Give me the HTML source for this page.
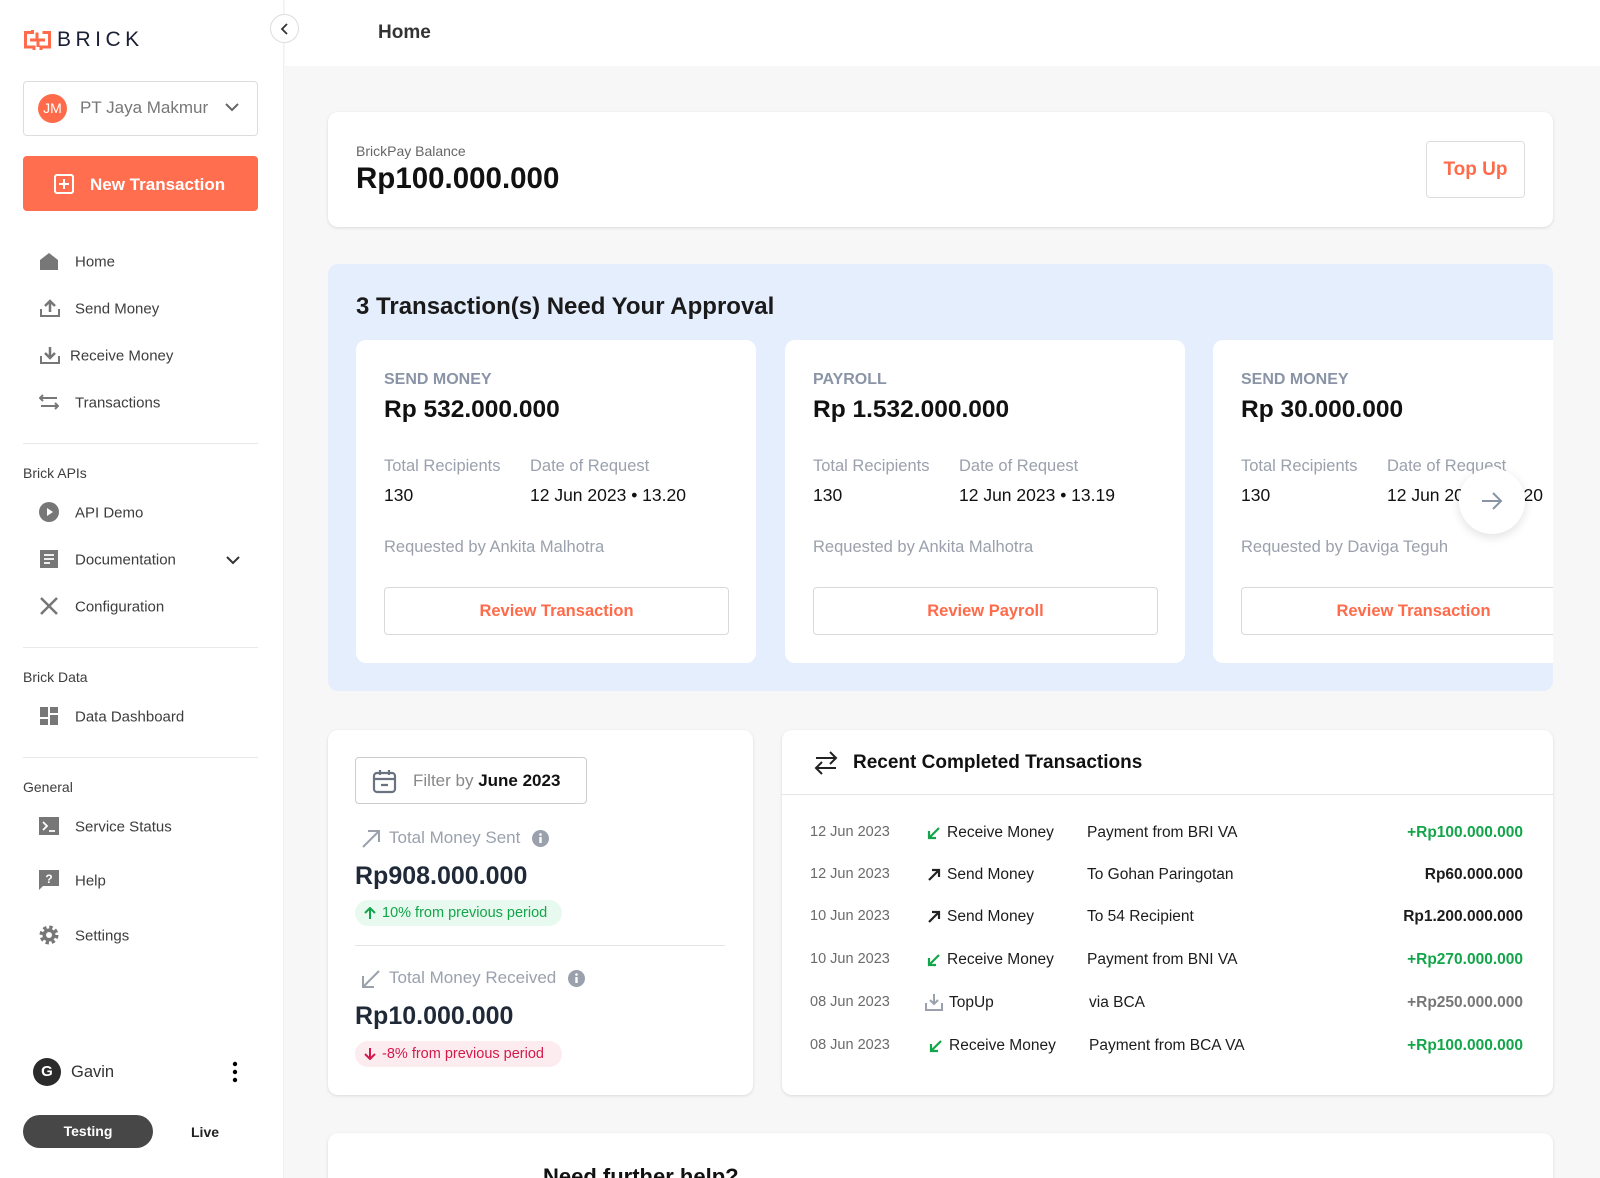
<!DOCTYPE html>
<html><head><meta charset="utf-8"><style>
*{box-sizing:border-box;margin:0;padding:0}
html,body{width:1600px;height:1178px;overflow:hidden}
body{background:#f7f7f7;font-family:"Liberation Sans",Arial,sans-serif;color:#1c1c1c;position:relative}
#wrap{position:absolute;left:0;top:0;width:1600px;height:1178px;overflow:hidden}
.a{position:absolute;white-space:nowrap}
.side{position:absolute;left:0;top:0;width:284px;height:1178px;background:#fff;border-right:1px solid #f0f0f0}
.nav{position:absolute;left:75px;font-size:15px;color:#3d3d3d;transform:translateY(-50%)}
.ic{position:absolute;left:39px;transform:translateY(-50%)}
.sec{position:absolute;left:23px;font-size:14px;color:#3d3d3d;transform:translateY(-50%)}
.hr{position:absolute;left:23px;width:235px;height:1px;background:#e8e8e8}
.card{position:absolute;background:#fff;border-radius:10px;box-shadow:0 1px 3px rgba(0,0,0,.12)}
.mid{transform:translateY(-50%)}
.ac{position:absolute;top:340px;width:400px;height:323px;background:#fff;border-radius:10px}
.ac .l{position:absolute;left:28px;top:31px;font-size:16px;font-weight:bold;color:#8a94a6}
.ac .v{position:absolute;left:28px;top:56px;font-size:24.5px;font-weight:bold;color:#111}
.ac .g{position:absolute;top:117px;font-size:16.5px;color:#9aa1ad}
.ac .d{position:absolute;top:145px;font-size:17.5px;color:#111}
.ac .r{position:absolute;left:28px;top:198px;font-size:16.5px;color:#9aa1ad}
.ac .b{position:absolute;left:28px;top:247px;width:345px;height:48px;border:1px solid #d9d9d9;border-radius:4px;color:#ff6b4a;font-weight:bold;font-size:16.5px;text-align:center;line-height:46px}
.row{position:absolute;left:0;width:771px;height:20px;font-size:15.5px}
.row span{position:absolute;top:0}
.row svg{position:absolute;top:2px}
.dt{left:28px;color:#6b6b6b;font-size:14.5px}
.am{right:30px;font-weight:bold}
.gr{color:#13a54a}
</style></head><body><div id="wrap">
<div class="a" style="left:285px;top:0;width:1315px;height:66px;background:#fff"></div>
<div class="side">
 <svg class="a" style="left:24px;top:29px" width="27" height="22" viewBox="0 0 27 22" fill="none" stroke="#ff6b4a" stroke-width="3"><path d="M1.5 15V3.5h7V1M25.5 15V3.5h-7M10 21v-3H1.5v-3M17 21v-3h8.5v-3M6 11h15M13 3.5V11M14 11v7"/></svg>
 <div class="a" style="left:57px;top:28px;font-size:21px;letter-spacing:4.5px;color:#1a1f36">BRICK</div>
 <div class="hr" style="top:443px"></div>
 <div class="a" style="left:23px;top:81px;width:235px;height:55px;border:1px solid #ddd;border-radius:4px"></div>
 <div class="a" style="left:38px;top:94px;width:29px;height:29px;border-radius:50%;background:#ff6b4a;color:#fff;font-size:14px;text-align:center;line-height:29px">JM</div>
 <div class="a" style="left:80px;top:98px;font-size:17px;color:#777">PT Jaya Makmur</div>
 <svg class="a" style="left:224px;top:102px" width="16" height="10"><path d="M2 2l6 6 6-6" stroke="#666" stroke-width="2" fill="none"/></svg>
 <div class="a" style="left:23px;top:156px;width:235px;height:55px;background:#ff6f4f;border-radius:4px"></div>
 <svg class="a" style="left:54px;top:174px" width="20" height="20"><rect x="1" y="1" width="18" height="18" rx="2" stroke="#fff" stroke-width="2" fill="none"/><path d="M10 5v10M5 10h10" stroke="#fff" stroke-width="2"/></svg>
 <div class="a" style="left:90px;top:175px;font-size:17px;font-weight:bold;color:#fff">New Transaction</div>

 <svg class="ic" style="top:261px" width="20" height="20"><path d="M1 9L10 2l9 7v10H1z" fill="#777"/></svg><div class="nav" style="top:262px">Home</div>
 <svg class="ic" style="top:308px" width="22" height="20"><path d="M2 11v7h18v-7" stroke="#777" stroke-width="2" fill="none"/><path d="M11 14V5M6 8l5-5 5 5" stroke="#777" stroke-width="2.5" fill="none"/></svg><div class="nav" style="top:309px">Send Money</div>
 <svg class="ic" style="top:355px" width="22" height="20"><path d="M2 11v7h18v-7" stroke="#777" stroke-width="2" fill="none"/><path d="M11 2v10M6 8l5 5 5-5" stroke="#777" stroke-width="2.5" fill="none"/></svg><div class="nav" style="top:356px;left:70px">Receive Money</div>
 <svg class="ic" style="top:402px" width="20" height="18"><path d="M2 5h16M4 2L1 5l3 3M18 13H2M16 10l3 3-3 3" stroke="#777" stroke-width="2" fill="none"/></svg><div class="nav" style="top:403px">Transactions</div>
 <div class="sec" style="top:473px">Brick APIs</div>
 <svg class="ic" style="top:512px" width="20" height="20"><circle cx="10" cy="10" r="10" fill="#777"/><path d="M8 6l6 4-6 4z" fill="#fff"/></svg><div class="nav" style="top:513px">API Demo</div>
 <svg class="ic" style="top:559px" width="20" height="20"><rect x="1" y="1" width="18" height="18" fill="#777"/><path d="M5 6h10M5 10h10M5 14h6" stroke="#fff" stroke-width="1.8"/></svg><div class="nav" style="top:560px">Documentation</div>
 <svg class="a" style="left:225px;top:555px" width="16" height="10"><path d="M2 2l6 6 6-6" stroke="#333" stroke-width="2" fill="none"/></svg>
 <svg class="ic" style="top:606px" width="20" height="20"><path d="M2 2l16 16M18 2L2 18" stroke="#777" stroke-width="2.5"/></svg><div class="nav" style="top:607px">Configuration</div>
 <div class="hr" style="top:647px"></div>
 <div class="sec" style="top:677px">Brick Data</div>
 <svg class="ic" style="top:716px" width="20" height="20"><rect x="1" y="1" width="8" height="10" fill="#777"/><rect x="11" y="1" width="8" height="6" fill="#777"/><rect x="1" y="13" width="8" height="6" fill="#777"/><rect x="11" y="9" width="8" height="10" fill="#777"/></svg><div class="nav" style="top:717px">Data Dashboard</div>
 <div class="hr" style="top:757px"></div>
 <div class="sec" style="top:787px">General</div>
 <svg class="ic" style="top:826px" width="20" height="18"><rect width="20" height="18" fill="#777"/><path d="M4 5l4 4-4 4M10 14h6" stroke="#fff" stroke-width="1.8" fill="none"/></svg><div class="nav" style="top:827px">Service Status</div>
 <svg class="ic" style="top:880px" width="20" height="20"><path d="M0 0h20v16H4l-4 4z" fill="#777"/><text x="10" y="13" font-size="12" font-weight="bold" fill="#fff" text-anchor="middle" font-family="Liberation Sans">?</text></svg><div class="nav" style="top:881px">Help</div>
 <svg class="ic" style="top:935px" width="20" height="20"><circle cx="10" cy="10" r="7" fill="none" stroke="#777" stroke-width="5" stroke-dasharray="3 2.5"/><circle cx="10" cy="10" r="6.5" fill="#777"/><circle cx="10" cy="10" r="3" fill="#fff"/></svg><div class="nav" style="top:936px">Settings</div>
 <div class="a" style="left:33px;top:1058px;width:28px;height:28px;border-radius:50%;background:#2b2b2b;color:#fff;font-weight:bold;font-size:15px;text-align:center;line-height:28px">G</div>
 <div class="a" style="left:71px;top:1063px;font-size:16.5px;color:#333">Gavin</div>
 <svg class="a" style="left:232px;top:1061px" width="6" height="22"><circle cx="3" cy="3" r="2.2"/><circle cx="3" cy="11" r="2.2"/><circle cx="3" cy="19" r="2.2"/></svg>
 <div class="a" style="left:23px;top:1115px;width:130px;height:33px;border-radius:17px;background:#474747;color:#fff;font-weight:bold;font-size:14px;text-align:center;line-height:33px">Testing</div>
 <div class="a" style="left:191px;top:1124px;font-weight:bold;font-size:14px;color:#222">Live</div>
</div>
<div class="a" style="left:270px;top:14px;width:29px;height:29px;border-radius:50%;border:1px solid #ddd;background:#fff"><svg style="position:absolute;left:9px;top:8px" width="10" height="12"><path d="M7 1L2 6l5 5" stroke="#333" stroke-width="1.8" fill="none"/></svg></div>
<div class="a mid" style="left:378px;top:33px;font-size:19px;font-weight:bold;color:#333">Home</div>

<div class="card" style="left:328px;top:112px;width:1225px;height:115px">
 <div class="a" style="left:28px;top:31px;font-size:14px;color:#666">BrickPay Balance</div>
 <div class="a" style="left:28px;top:50px;font-size:29.5px;font-weight:bold;color:#111">Rp100.000.000</div>
 <div class="a" style="left:1098px;top:29px;width:99px;height:57px;border:1px solid #ddd;border-radius:4px;color:#ff6b4a;font-weight:bold;font-size:19px;text-align:center;line-height:55px">Top Up</div>
</div>

<div class="a" style="left:328px;top:264px;width:1225px;height:427px;background:#e5eefc;border-radius:10px;overflow:hidden">
 <div class="a" style="left:28px;top:29px;font-size:24px;font-weight:bold;color:#1a1a1a">3 Transaction(s) Need Your Approval</div>
 <div class="ac" style="left:28px;top:76px"><div class="l">SEND MONEY</div><div class="v">Rp 532.000.000</div><div class="g" style="left:28px">Total Recipients</div><div class="g" style="left:174px">Date of Request</div><div class="d" style="left:28px">130</div><div class="d" style="left:174px">12 Jun 2023 • 13.20</div><div class="r">Requested by Ankita Malhotra</div><div class="b">Review Transaction</div></div>
 <div class="ac" style="left:457px;top:76px"><div class="l">PAYROLL</div><div class="v">Rp 1.532.000.000</div><div class="g" style="left:28px">Total Recipients</div><div class="g" style="left:174px">Date of Request</div><div class="d" style="left:28px">130</div><div class="d" style="left:174px">12 Jun 2023 • 13.19</div><div class="r">Requested by Ankita Malhotra</div><div class="b">Review Payroll</div></div>
 <div class="ac" style="left:885px;top:76px"><div class="l">SEND MONEY</div><div class="v">Rp 30.000.000</div><div class="g" style="left:28px">Total Recipients</div><div class="g" style="left:174px">Date of Request</div><div class="d" style="left:28px">130</div><div class="d" style="left:174px">12 Jun 2023 • 13.20</div><div class="r">Requested by Daviga Teguh</div><div class="b">Review Transaction</div></div>
 <div class="a" style="left:1131px;top:204px;width:66px;height:66px;border-radius:50%;background:#fff;box-shadow:0 3px 10px rgba(0,0,0,.12)"><svg style="position:absolute;left:22px;top:23px" width="22" height="20"><path d="M1 10h19M12 2l8 8-8 8" stroke="#8a94a6" stroke-width="2" fill="none"/></svg></div>
</div>

<div class="card" style="left:328px;top:730px;width:425px;height:365px">
 <div class="a" style="left:27px;top:27px;width:232px;height:47px;border:1px solid #ccc;border-radius:4px"></div>
 <svg class="a" style="left:44px;top:39px" width="25" height="25"><rect x="2" y="4" width="21" height="19" rx="3" stroke="#6b7280" stroke-width="2.2" fill="none"/><path d="M2 10h21M8 1v5M17 1v5M9 16h7" stroke="#6b7280" stroke-width="2.2"/></svg>
 <div class="a" style="left:85px;top:41px;font-size:17px;color:#888">Filter by <b style="color:#111">June 2023</b></div>
 <svg class="a" style="left:33px;top:99px" width="20" height="20"><path d="M2 18L18 2M7 2h11v11" stroke="#9aa1ad" stroke-width="2" fill="none"/></svg>
 <div class="a" style="left:61px;top:98px;font-size:17px;color:#9aa1ad">Total Money Sent</div>
 <svg class="a" style="left:204px;top:100px" width="17" height="17"><circle cx="8.5" cy="8.5" r="8.5" fill="#9aa1ad"/><rect x="7.3" y="7" width="2.4" height="6" fill="#fff"/><circle cx="8.5" cy="4.5" r="1.3" fill="#fff"/></svg>
 <div class="a" style="left:27px;top:132px;font-size:25px;font-weight:bold;color:#1f2937">Rp908.000.000</div>
 <div class="a" style="left:27px;top:170px;width:207px;height:26px;border-radius:13px;background:#e8faef;color:#13a54a;font-size:14.5px;line-height:26px;padding-left:27px">10% from previous period</div>
 <svg class="a" style="left:36px;top:177px" width="12" height="13"><path d="M6 12V2M1 6l5-5 5 5" stroke="#13a54a" stroke-width="2" fill="none"/></svg>
 <div class="a" style="left:27px;top:215px;width:370px;height:1px;background:#e5e5e5"></div>
 <svg class="a" style="left:33px;top:239px" width="20" height="20"><path d="M18 2L2 18M2 7v11h11" stroke="#9aa1ad" stroke-width="2" fill="none"/></svg>
 <div class="a" style="left:61px;top:238px;font-size:17px;color:#9aa1ad">Total Money Received</div>
 <svg class="a" style="left:240px;top:240px" width="17" height="17"><circle cx="8.5" cy="8.5" r="8.5" fill="#9aa1ad"/><rect x="7.3" y="7" width="2.4" height="6" fill="#fff"/><circle cx="8.5" cy="4.5" r="1.3" fill="#fff"/></svg>
 <div class="a" style="left:27px;top:272px;font-size:25px;font-weight:bold;color:#1f2937">Rp10.000.000</div>
 <div class="a" style="left:27px;top:311px;width:207px;height:26px;border-radius:13px;background:#fdecef;color:#d4194a;font-size:14.5px;line-height:26px;padding-left:27px">-8% from previous period</div>
 <svg class="a" style="left:36px;top:317px" width="12" height="13"><path d="M6 1v10M1 7l5 5 5-5" stroke="#d4194a" stroke-width="2" fill="none"/></svg>
</div>

<div class="card" style="left:782px;top:730px;width:771px;height:365px">
 <svg class="a" style="left:32px;top:21px" width="24" height="24"><path d="M2 7h20M16 1l6 6-6 6M22 17H2M8 11l-6 6 6 6" stroke="#222" stroke-width="2" fill="none"/></svg>
 <div class="a" style="left:71px;top:22px;font-size:19px;font-weight:bold;color:#111">Recent Completed Transactions</div>
 <div class="a" style="left:0;top:64px;width:771px;height:1px;background:#e5e5e5"></div>
 <div class="row" style="top:94px"><span class="dt">12 Jun 2023</span><svg style="left:145px" width="14" height="14"><path d="M12 2L2 12M2 5v7h7" stroke="#13a54a" stroke-width="2.2" fill="none"/></svg><span style="left:165px">Receive Money</span><span style="left:305px">Payment from BRI VA</span><span class="am gr">+Rp100.000.000</span></div>
 <div class="row" style="top:136px"><span class="dt">12 Jun 2023</span><svg style="left:145px" width="14" height="14"><path d="M2 12L12 2M5 2h7v7" stroke="#222" stroke-width="2.2" fill="none"/></svg><span style="left:165px">Send Money</span><span style="left:305px">To Gohan Paringotan</span><span class="am">Rp60.000.000</span></div>
 <div class="row" style="top:178px"><span class="dt">10 Jun 2023</span><svg style="left:145px" width="14" height="14"><path d="M2 12L12 2M5 2h7v7" stroke="#222" stroke-width="2.2" fill="none"/></svg><span style="left:165px">Send Money</span><span style="left:305px">To 54 Recipient</span><span class="am">Rp1.200.000.000</span></div>
 <div class="row" style="top:221px"><span class="dt">10 Jun 2023</span><svg style="left:145px" width="14" height="14"><path d="M12 2L2 12M2 5v7h7" stroke="#13a54a" stroke-width="2.2" fill="none"/></svg><span style="left:165px">Receive Money</span><span style="left:305px">Payment from BNI VA</span><span class="am gr">+Rp270.000.000</span></div>
 <div class="row" style="top:264px"><span class="dt">08 Jun 2023</span><svg style="left:143px;top:-1px" width="18" height="18"><path d="M1 10v7h16v-7" stroke="#9aa1ad" stroke-width="2" fill="none"/><path d="M9 1v10M5 7l4 4 4-4" stroke="#9aa1ad" stroke-width="2" fill="none"/></svg><span style="left:167px">TopUp</span><span style="left:307px">via BCA</span><span class="am" style="color:#777">+Rp250.000.000</span></div>
 <div class="row" style="top:307px"><span class="dt">08 Jun 2023</span><svg style="left:147px" width="14" height="14"><path d="M12 2L2 12M2 5v7h7" stroke="#13a54a" stroke-width="2.2" fill="none"/></svg><span style="left:167px">Receive Money</span><span style="left:307px">Payment from BCA VA</span><span class="am gr">+Rp100.000.000</span></div>
</div>

<div class="card" style="left:328px;top:1133px;width:1225px;height:80px">
 <div class="a" style="left:215px;top:31px;font-size:22px;font-weight:bold;color:#111">Need further help?</div>
</div>
</div></body></html>
